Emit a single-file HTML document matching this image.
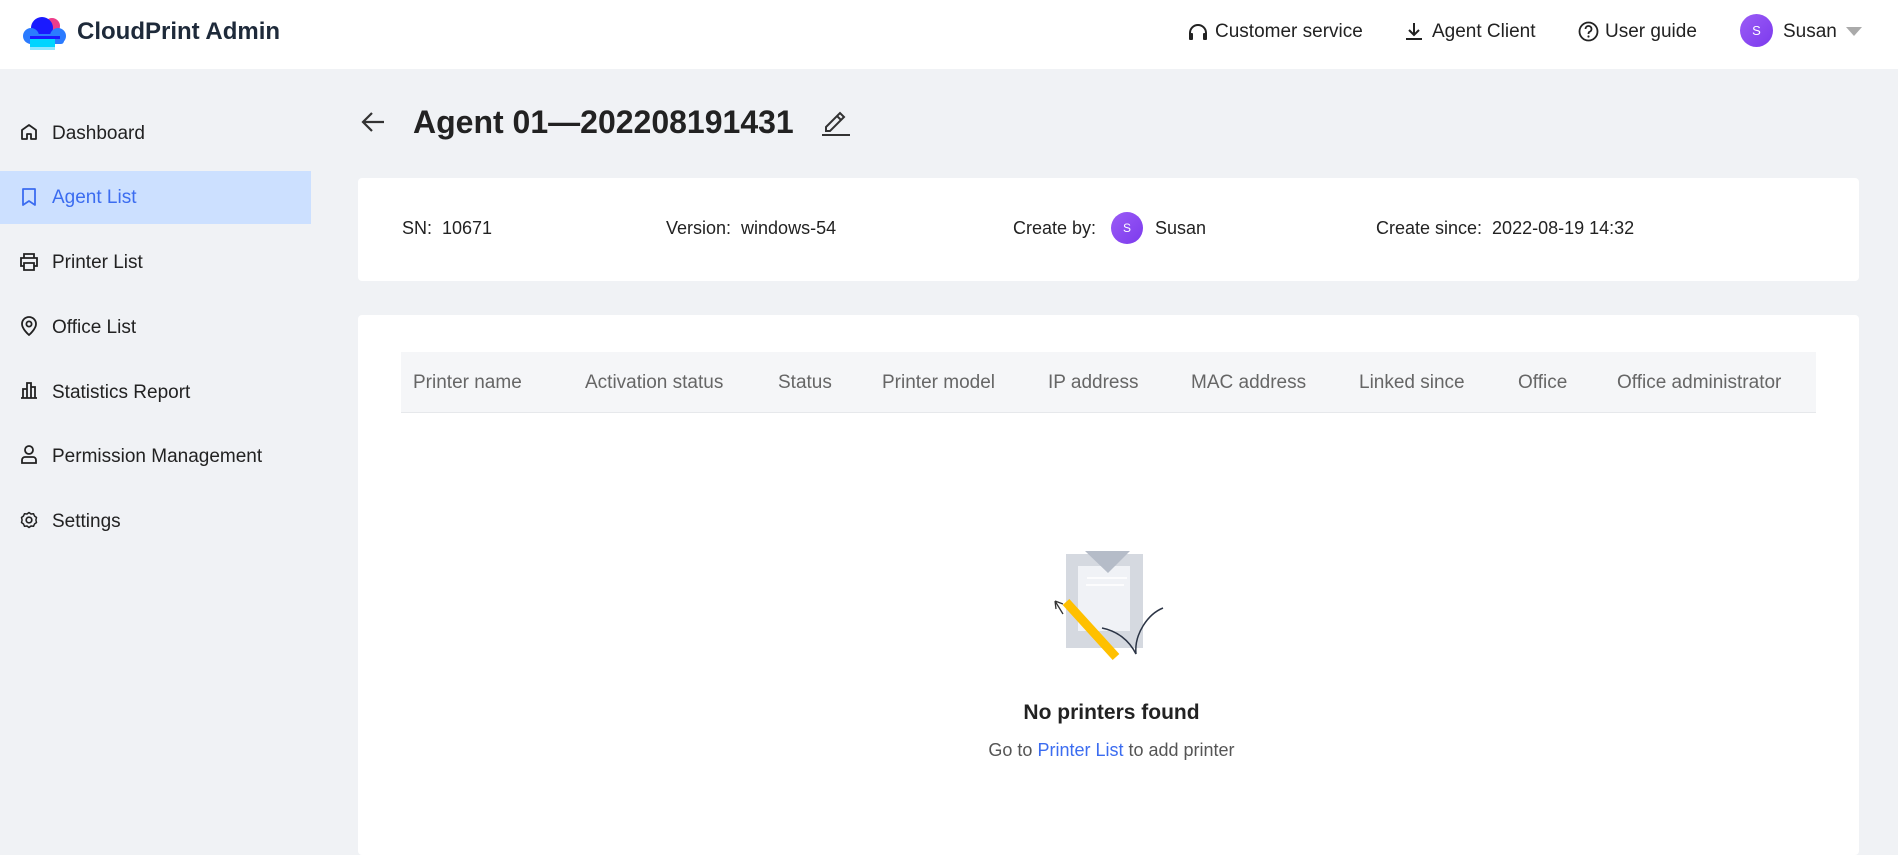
<!DOCTYPE html>
<html><head><meta charset="utf-8"><style>
*{margin:0;padding:0;box-sizing:border-box}
body{width:1898px;height:837px;overflow:hidden;background:#f0f2f5;font-family:"Liberation Sans",Arial,sans-serif;color:#222;position:relative}
.abs{position:absolute}
.hdr{left:0;top:0;width:1898px;height:69px;background:#fff}
.nav{font-size:19px;color:#222;white-space:nowrap}
.side{font-size:19px;color:#222;white-space:nowrap}
.card{background:#fff;border-radius:4px}
.th{font-size:19px;color:#666;top:372px;white-space:nowrap}
svg{display:block}
</style></head><body>
<div class="abs hdr"></div>
<svg class="abs" style="left:20px;top:12px" width="50" height="40" viewBox="0 0 50 40">
<circle cx="32" cy="14" r="8" fill="#ee3d8a"/>
<circle cx="22" cy="16" r="11" fill="#1a1aff"/>
<circle cx="11" cy="24" r="8" fill="#2b7bff"/>
<circle cx="38" cy="24" r="8" fill="#2b7bff"/>
<rect x="8" y="22" width="36" height="10" rx="3" fill="#2b7bff"/>
<rect x="10" y="24" width="30" height="3" fill="#1a1aff"/>
<rect x="10" y="27" width="25" height="10" fill="#00d4ff"/>
<rect x="10" y="35" width="25" height="3" fill="#8ee6ff"/>
</svg>
<div class="abs" style="left:77px;top:18px;font-size:24px;font-weight:bold;color:#1e2a3a">CloudPrint Admin</div>

<svg class="abs" style="left:1188px;top:23px" width="20" height="18" viewBox="0 0 20 18"><path d="M2 16V10a8 8 0 0 1 16 0v6" fill="none" stroke="#222" stroke-width="2"/><rect x="1" y="10" width="4" height="7" rx="1" fill="#222"/><rect x="15" y="10" width="4" height="7" rx="1" fill="#222"/></svg>
<div class="abs nav" style="left:1215px;top:21px">Customer service</div>
<svg class="abs" style="left:1404px;top:21px" width="20" height="20" viewBox="0 0 20 20"><path d="M10 2v12M5 9l5 5 5-5M2 18h16" fill="none" stroke="#222" stroke-width="2"/></svg>
<div class="abs nav" style="left:1432px;top:21px">Agent Client</div>
<svg class="abs" style="left:1578px;top:21px" width="21" height="21" viewBox="0 0 21 21"><circle cx="10.5" cy="10.5" r="9" fill="none" stroke="#222" stroke-width="1.8"/><path d="M7.5 8a3 3 0 1 1 4 2.8c-1 .4-1 1-1 2.2" fill="none" stroke="#222" stroke-width="1.8"/><circle cx="10.5" cy="15.5" r="1.1" fill="#222"/></svg>
<div class="abs nav" style="left:1605px;top:21px">User guide</div>
<div class="abs" style="left:1740px;top:14px;width:33px;height:33px;border-radius:50%;background:linear-gradient(135deg,#9b5cf6,#7c3aed);color:#fff;font-size:13px;text-align:center;line-height:33px">S</div>
<div class="abs nav" style="left:1783px;top:21px">Susan</div>
<div class="abs" style="left:1846px;top:27px;width:0;height:0;border-left:8px solid transparent;border-right:8px solid transparent;border-top:9px solid #aaa"></div>

<!-- sidebar -->
<div class="abs" style="left:0;top:171px;width:311px;height:53px;background:#cce0ff"></div>
<svg class="abs" style="left:20px;top:123px" width="18" height="18" viewBox="0 0 18 18"><path d="M2 16V7l7-5 7 5v9h-5v-5H7v5z" fill="none" stroke="#222" stroke-width="1.8" stroke-linejoin="round"/></svg>
<div class="abs side" style="left:52px;top:123px">Dashboard</div>
<svg class="abs" style="left:21px;top:188px" width="16" height="19" viewBox="0 0 16 19"><path d="M2 1h12v16l-6-4-6 4z" fill="none" stroke="#3b6cf0" stroke-width="1.8" stroke-linejoin="round"/></svg>
<div class="abs side" style="left:52px;top:187px;color:#3b6cf0">Agent List</div>
<svg class="abs" style="left:19px;top:252px" width="20" height="19" viewBox="0 0 20 19"><path d="M5 6V2h10v4M5 14H2V6h16v8h-3M5 11h10v7H5z" fill="none" stroke="#222" stroke-width="1.8"/></svg>
<div class="abs side" style="left:52px;top:252px">Printer List</div>
<svg class="abs" style="left:20px;top:316px" width="18" height="20" viewBox="0 0 18 20"><path d="M9 19s-7-6-7-11a7 7 0 0 1 14 0c0 5-7 11-7 11z" fill="none" stroke="#222" stroke-width="1.8"/><circle cx="9" cy="8" r="2.6" fill="none" stroke="#222" stroke-width="1.8"/></svg>
<div class="abs side" style="left:52px;top:317px">Office List</div>
<svg class="abs" style="left:20px;top:381px" width="18" height="18" viewBox="0 0 18 18"><path d="M1 17h16M3 17V8h4v9M7 17V2h4v15M11 17V6h4v11" fill="none" stroke="#222" stroke-width="1.8"/></svg>
<div class="abs side" style="left:52px;top:382px">Statistics Report</div>
<svg class="abs" style="left:20px;top:445px" width="18" height="19" viewBox="0 0 18 19"><circle cx="9" cy="5" r="4" fill="none" stroke="#222" stroke-width="1.8"/><path d="M2 18v-3a3 3 0 0 1 3-3h8a3 3 0 0 1 3 3v3z" fill="none" stroke="#222" stroke-width="1.8"/></svg>
<div class="abs side" style="left:52px;top:446px">Permission Management</div>
<svg class="abs" style="left:20px;top:511px" width="18" height="18" viewBox="0 0 18 18"><circle cx="9" cy="9" r="2.8" fill="none" stroke="#222" stroke-width="1.7"/><path d="M9 1.5l2 1.5 2.5-.3 1 2.3 2 1.5-.6 2.5.6 2.5-2 1.5-1 2.3-2.5-.3-2 1.5-2-1.5-2.5.3-1-2.3-2-1.5.6-2.5-.6-2.5 2-1.5 1-2.3 2.5.3z" fill="none" stroke="#222" stroke-width="1.5" stroke-linejoin="round"/></svg>
<div class="abs side" style="left:52px;top:511px">Settings</div>

<!-- title -->
<svg class="abs" style="left:360px;top:111px" width="26" height="22" viewBox="0 0 26 22"><path d="M24 11H3M12 2l-9 9 9 9" fill="none" stroke="#333" stroke-width="2.2"/></svg>
<div class="abs" style="left:413px;top:104px;font-size:32px;font-weight:bold;color:#222">Agent 01—202208191431</div>
<svg class="abs" style="left:820px;top:107px" width="32" height="30" viewBox="0 0 32 30"><path d="M6 20l14-14 4 4-14 14H6z M17 9l4 4" fill="none" stroke="#333" stroke-width="2"/><path d="M2 28h28" stroke="#333" stroke-width="2"/></svg>

<!-- info card -->
<div class="abs card" style="left:358px;top:178px;width:1501px;height:103px"></div>
<div class="abs" style="left:402px;top:218px;font-size:18px">SN:&nbsp; 10671</div>
<div class="abs" style="left:666px;top:218px;font-size:18px">Version:&nbsp; windows-54</div>
<div class="abs" style="left:1013px;top:218px;font-size:18px">Create by:</div>
<div class="abs" style="left:1111px;top:212px;width:32px;height:32px;border-radius:50%;background:linear-gradient(135deg,#9b5cf6,#7c3aed);color:#fff;font-size:12px;text-align:center;line-height:32px">S</div>
<div class="abs" style="left:1155px;top:218px;font-size:18px">Susan</div>
<div class="abs" style="left:1376px;top:218px;font-size:18px">Create since:&nbsp; 2022-08-19 14:32</div>

<!-- table card -->
<div class="abs card" style="left:358px;top:315px;width:1501px;height:540px"></div>
<div class="abs" style="left:401px;top:352px;width:1415px;height:61px;background:#f5f6f8;border-bottom:1px solid #e6e8eb"></div>
<div class="abs th" style="left:413px">Printer name</div>
<div class="abs th" style="left:585px">Activation status</div>
<div class="abs th" style="left:778px">Status</div>
<div class="abs th" style="left:882px">Printer model</div>
<div class="abs th" style="left:1048px">IP address</div>
<div class="abs th" style="left:1191px">MAC address</div>
<div class="abs th" style="left:1359px">Linked since</div>
<div class="abs th" style="left:1518px">Office</div>
<div class="abs th" style="left:1617px">Office administrator</div>

<svg class="abs" style="left:1050px;top:548px" width="120" height="118" viewBox="0 0 120 118">
<rect x="16" y="6" width="77" height="94" fill="#d5d9e0"/>
<rect x="28" y="18" width="52" height="65" fill="#f0f2f6"/>
<path d="M35 3h45l-22 22z" fill="#b5bcc8"/>
<path d="M37 30h40M36 37h38" stroke="#fff" stroke-width="1.5"/>
<path d="M16 54l50 55" stroke="#ffc000" stroke-width="9"/>
<path d="M13 66l-8-13M5 53l1 8M5 53l8 3" fill="none" stroke="#333" stroke-width="1.3"/>
<path d="M52 80c15 3 27 12 34 26c-2-20 12-40 27-46" fill="none" stroke="#2b3445" stroke-width="1.5"/>
</svg>
<div class="abs" style="left:0;width:2223px;top:701px;text-align:center;font-size:21px;font-weight:bold;color:#222">No printers found</div>
<div class="abs" style="left:0;width:2223px;top:740px;text-align:center;font-size:18px;color:#555">Go to <span style="color:#3b6cf0">Printer List</span> to add printer</div>
</body></html>
